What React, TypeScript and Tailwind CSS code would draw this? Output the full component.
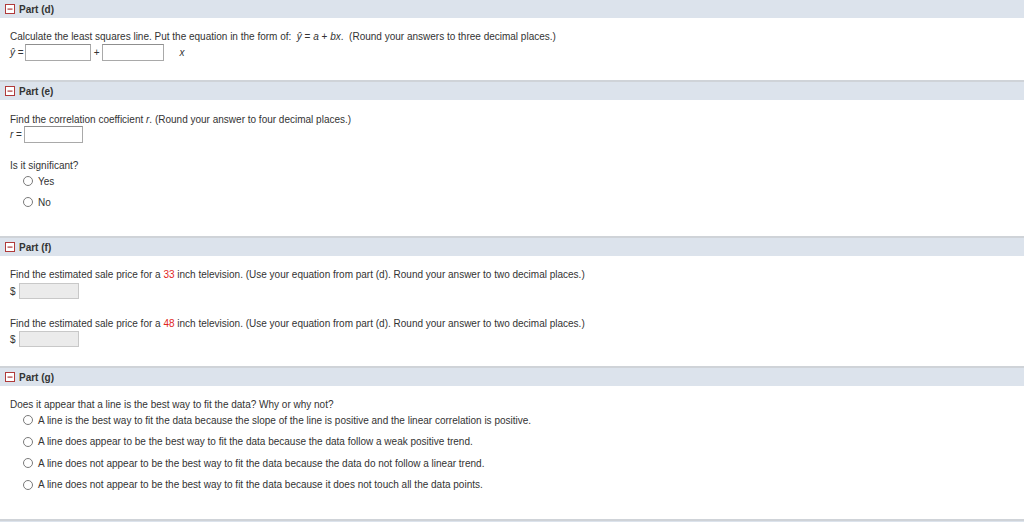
import type { ReactNode } from 'react'

const font = { fontFamily: '"Liberation Sans", Arial, sans-serif' }

function CollapseIcon() {
  return (
    <svg width="10" height="10" viewBox="0 0 10 10" className="shrink-0">
      <rect x="0.5" y="0.5" width="9" height="9" fill="#fff" stroke="#b03a3a" />
      <rect x="2.5" y="4.5" width="5" height="1.2" fill="#b03a3a" />
    </svg>
  )
}

function PartHeader({ label, first }: { label: string; first?: boolean }) {
  return (
    <div
      className={
        first
          ? 'flex h-[18px] items-center gap-[4px] bg-[#dce3ec] pl-[5px]'
          : 'flex h-[20px] items-center gap-[4px] border-t-2 border-[#cfd3d8] bg-[#dce3ec] pl-[5px]'
      }
    >
      <CollapseIcon />
      <span className="text-[10px] font-bold text-[#333]">{label}</span>
    </div>
  )
}

function Radio({ children }: { children: ReactNode }) {
  return (
    <div className="flex h-[12px] items-center gap-[5px] pl-[23px]">
      <span className="h-[10px] w-[10px] shrink-0 rounded-full border border-[#7a7a7a] bg-white" />
      <span>{children}</span>
    </div>
  )
}

function Blank({ w, disabled }: { w: string; disabled?: boolean }) {
  return (
    <span
      className={
        disabled
          ? `inline-block h-[16px] ${w} border border-[#c8c8c8] bg-[#ebebeb]`
          : `inline-block h-[17px] ${w} border border-[#a9a9a9] border-t-[#8f8f8f] bg-white`
      }
    />
  )
}

export default function App() {
  return (
    <div className="h-[522px] w-[1024px] overflow-hidden bg-white text-[10px] text-[#333]" style={font}>
      <PartHeader label="Part (d)" first />
      <div className="px-[10px] pt-[12px] pb-[19px]">
        <div className="flex h-[12px] items-center whitespace-pre">
          Calculate the least squares line. Put the equation in the form of:  <i>ŷ</i> = <i>a</i> + <i>bx</i>.  (Round your answers to three decimal places.)
        </div>
        <div className="mt-[2px] flex h-[17px] items-center">
          <span className="mr-[1px] whitespace-pre"><i>ŷ</i> =</span>
          <Blank w="w-[66px]" />
          <span className="mx-[3px]">+</span>
          <Blank w="w-[62px]" />
          <span className="ml-[15px] italic">x</span>
        </div>
      </div>

      <PartHeader label="Part (e)" />
      <div className="px-[10px] pt-[13px] pb-[28px]">
        <div className="flex h-[12px] items-center whitespace-pre">
          Find the correlation coefficient <i>r</i>. (Round your answer to four decimal places.)
        </div>
        <div className="mt-[1px] flex h-[17px] items-center">
          <span className="mr-[2px] whitespace-pre"><i>r</i> =</span>
          <Blank w="w-[59px]" />
        </div>
        <div className="mt-[16px] flex h-[12px] items-center">Is it significant?</div>
        <div className="-ml-[10px] mt-[4px] flex flex-col gap-[9px]">
          <Radio>Yes</Radio>
          <Radio>No</Radio>
        </div>
      </div>

      <PartHeader label="Part (f)" />
      <div className="px-[10px] pt-[12px] pb-[19px]">
        <div className="flex h-[12px] items-center whitespace-pre">
          Find the estimated sale price for a <span className="text-[#e0261c]">33</span> inch television. (Use your equation from part (d). Round your answer to two decimal places.)
        </div>
        <div className="mt-[3px] flex h-[16px] items-center">
          <span className="w-[9px]">$</span>
          <Blank w="w-[60px]" disabled />
        </div>
        <div className="mt-[18px] flex h-[12px] items-center whitespace-pre">
          Find the estimated sale price for a <span className="text-[#e0261c]">48</span> inch television. (Use your equation from part (d). Round your answer to two decimal places.)
        </div>
        <div className="mt-[2px] flex h-[16px] items-center">
          <span className="w-[9px]">$</span>
          <Blank w="w-[60px]" disabled />
        </div>
      </div>

      <PartHeader label="Part (g)" />
      <div className="px-[10px] pt-[12px] pb-[28px]">
        <div className="flex h-[12px] items-center">
          Does it appear that a line is the best way to fit the data? Why or why not?
        </div>
        <div className="-ml-[10px] mt-[4px] flex flex-col gap-[9.5px]">
          <Radio>A line is the best way to fit the data because the slope of the line is positive and the linear correlation is positive.</Radio>
          <Radio>A line does appear to be the best way to fit the data because the data follow a weak positive trend.</Radio>
          <Radio>A line does not appear to be the best way to fit the data because the data do not follow a linear trend.</Radio>
          <Radio>A line does not appear to be the best way to fit the data because it does not touch all the data points.</Radio>
        </div>
      </div>
      <div className="h-[20px] border-t-2 border-[#cfd3d8] bg-[#dce3ec]" />
    </div>
  )
}
